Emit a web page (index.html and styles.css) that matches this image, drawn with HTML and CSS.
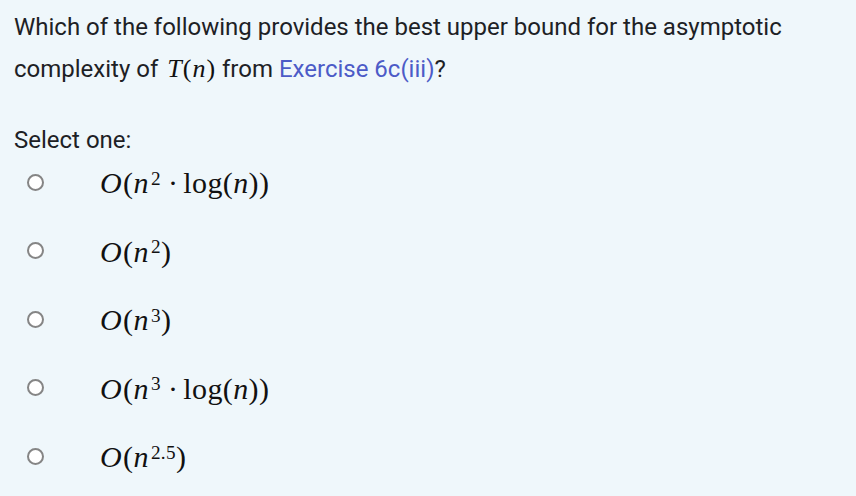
FILE: index.html
```html
<!DOCTYPE html>
<html>
<head>
<meta charset="utf-8">
<link rel="stylesheet" href="styles.css">
</head>
<body>
<div class="question">
  <div class="qtext">Which of the following provides the best upper bound for the asymptotic complexity of <span class="math inline"><i>T</i>(<i>n</i>)</span> from <a class="link" href="#">Exercise 6c(iii)</a>?</div>
  <div class="prompt">Select one:</div>
  <div class="answers">
    <div class="opt"><span class="radio"></span><span class="math"><i class="cal">O</i>(<i>n</i><sup>2</sup><span class="dot">·</span>log(<i>n</i>))</span></div>
    <div class="opt"><span class="radio"></span><span class="math"><i class="cal">O</i>(<i>n</i><sup>2</sup>)</span></div>
    <div class="opt"><span class="radio"></span><span class="math"><i class="cal">O</i>(<i>n</i><sup>3</sup>)</span></div>
    <div class="opt"><span class="radio"></span><span class="math"><i class="cal">O</i>(<i>n</i><sup>3</sup><span class="dot">·</span>log(<i>n</i>))</span></div>
    <div class="opt"><span class="radio"></span><span class="math"><i class="cal">O</i>(<i>n</i><sup>2.5</sup>)</span></div>
  </div>
</div>
</body>
</html>
```
FILE: styles.css
```css
html, body {
  margin: 0;
  padding: 0;
  background: #eff7fb;
}
body {
  font-family: Roboto, "Liberation Sans", sans-serif;
  color: #1d2125;
  font-size: 24px;
}
.question {
  padding: 6px 14px 0 14px;
}
.qtext {
  line-height: 42px;
  width: 800px;
}
.link {
  color: #4c5bc7;
  text-decoration: none;
}
.prompt {
  margin-top: 35px;
  line-height: 30px;
}
.answers {
  display: flex;
  flex-direction: column;
  gap: 34.5px;
  margin-top: 10px;
}
.opt {
  display: flex;
  align-items: center;
  height: 34px;
}
.radio {
  width: 13px;
  height: 13px;
  border: 2px solid #858585;
  border-radius: 50%;
  background: #fff;
  margin-left: 13px;
  margin-right: 56px;
  flex: none;
}
.math {
  font-family: "Liberation Serif", "DejaVu Serif", serif;
  font-size: 30px;
  color: #111;
  letter-spacing: 0.4px;
  line-height: 34px;
  padding-top: 2px;
}
.math.inline {
  font-size: 26px;
  line-height: 1;
  letter-spacing: 1px;
  margin-left: 3px;
  padding-top: 0;
}
.math i {
  font-style: italic;
}
.math .cal {
  padding-right: 1px;
}
.math sup {
  font-size: 0.64em;
  line-height: 0;
  vertical-align: 0.42em;
  margin-left: 2px;
}
.dot {
  padding: 0 5px 0 7px;
}
```
